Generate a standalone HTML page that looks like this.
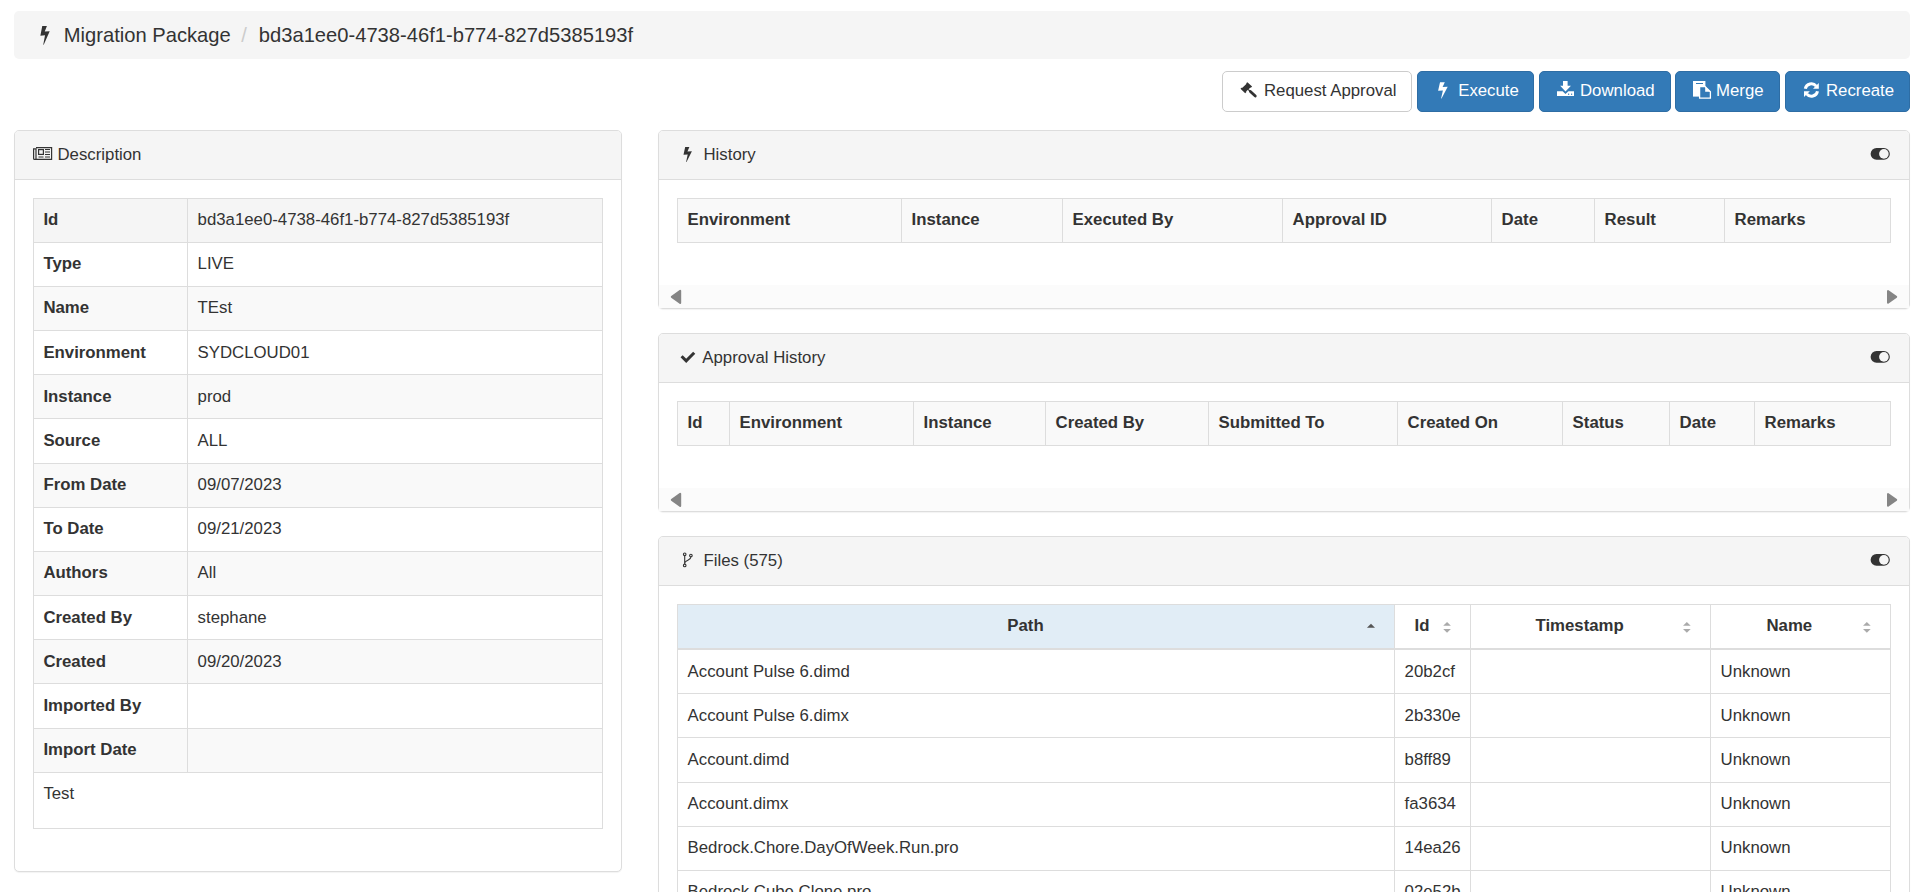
<!DOCTYPE html>
<html><head><meta charset="utf-8"><title>Migration Package</title>
<style>
html,body{margin:0;padding:0;background:#fff}
body{width:1927px;height:892px;overflow:hidden;position:relative;font-family:"Liberation Sans",sans-serif;font-size:16.8px;line-height:24px;color:#333}
body>div,body>span,body>svg{position:absolute;box-sizing:border-box}
body>span{white-space:nowrap;height:24px}
body>span.bc{font-size:20.16px;line-height:29px;height:29px}
</style></head><body>
<div style="left:14px;top:11px;width:1896px;height:48px;background:#f5f5f5;border-radius:5px"></div>
<span class="bc" style="left:63.8px;top:21px">Migration Package</span>
<span class="bc" style="left:241.3px;top:21px;color:#ccc">/</span>
<span class="bc" style="left:258.8px;top:21px">bd3a1ee0-4738-46f1-b774-827d5385193f</span>
<div style="left:1222px;top:71px;width:190px;height:41px;background:#fff;border:1px solid #ccc;border-radius:5px"></div>
<div style="left:1417px;top:71px;width:117px;height:41px;background:#337ab7;border:1px solid #2e6da4;border-radius:5px"></div>
<div style="left:1539px;top:71px;width:132px;height:41px;background:#337ab7;border:1px solid #2e6da4;border-radius:5px"></div>
<div style="left:1675px;top:71px;width:105px;height:41px;background:#337ab7;border:1px solid #2e6da4;border-radius:5px"></div>
<div style="left:1785px;top:71px;width:125px;height:41px;background:#337ab7;border:1px solid #2e6da4;border-radius:5px"></div>
<span style="left:1264px;top:79px;">Request Approval</span>
<span style="left:1458.2px;top:79px;color:#fff">Execute</span>
<span style="left:1580px;top:79px;color:#fff">Download</span>
<span style="left:1716px;top:79px;color:#fff">Merge</span>
<span style="left:1826px;top:79px;color:#fff">Recreate</span>
<div style="left:14px;top:130px;width:608px;height:742px;border:1px solid #ddd;border-radius:5px;background:#fff;box-shadow:0 1px 1px rgba(0,0,0,.05);overflow:hidden"></div>
<div style="left:15px;top:131px;width:606px;height:48px;background:#f5f5f5;border-radius:4px 4px 0 0"></div>
<div style="left:15px;top:179px;width:606px;height:1px;background:#ddd"></div>
<span style="left:57.5px;top:143px;">Description</span>
<div style="left:658px;top:130px;width:1252px;height:179px;border:1px solid #ddd;border-radius:5px;background:#fff;box-shadow:0 1px 1px rgba(0,0,0,.05);overflow:hidden"></div>
<div style="left:659px;top:131px;width:1250px;height:48px;background:#f5f5f5;border-radius:4px 4px 0 0"></div>
<div style="left:659px;top:179px;width:1250px;height:1px;background:#ddd"></div>
<span style="left:703.5px;top:143px;">History</span>
<div style="left:658px;top:333px;width:1252px;height:179px;border:1px solid #ddd;border-radius:5px;background:#fff;box-shadow:0 1px 1px rgba(0,0,0,.05);overflow:hidden"></div>
<div style="left:659px;top:334px;width:1250px;height:48px;background:#f5f5f5;border-radius:4px 4px 0 0"></div>
<div style="left:659px;top:382px;width:1250px;height:1px;background:#ddd"></div>
<span style="left:702.3px;top:346px;">Approval History</span>
<div style="left:658px;top:536px;width:1252px;height:400px;border:1px solid #ddd;border-radius:5px;background:#fff;box-shadow:0 1px 1px rgba(0,0,0,.05);overflow:hidden"></div>
<div style="left:659px;top:537px;width:1250px;height:48px;background:#f5f5f5;border-radius:4px 4px 0 0"></div>
<div style="left:659px;top:585px;width:1250px;height:1px;background:#ddd"></div>
<span style="left:703.5px;top:549px;">Files (575)</span>
<div style="left:34px;top:199px;width:568px;height:43px;background:#f5f5f5"></div>
<div style="left:34px;top:287px;width:568px;height:43px;background:#f9f9f9"></div>
<div style="left:34px;top:375px;width:568px;height:43px;background:#f9f9f9"></div>
<div style="left:34px;top:464px;width:568px;height:43px;background:#f9f9f9"></div>
<div style="left:34px;top:552px;width:568px;height:43px;background:#f9f9f9"></div>
<div style="left:34px;top:640px;width:568px;height:43px;background:#f9f9f9"></div>
<div style="left:34px;top:729px;width:568px;height:43px;background:#f9f9f9"></div>
<div style="left:33px;top:198px;width:570px;height:1px;background:#ddd"></div>
<div style="left:33px;top:242px;width:570px;height:1px;background:#ddd"></div>
<div style="left:33px;top:286px;width:570px;height:1px;background:#ddd"></div>
<div style="left:33px;top:330px;width:570px;height:1px;background:#ddd"></div>
<div style="left:33px;top:374px;width:570px;height:1px;background:#ddd"></div>
<div style="left:33px;top:418px;width:570px;height:1px;background:#ddd"></div>
<div style="left:33px;top:463px;width:570px;height:1px;background:#ddd"></div>
<div style="left:33px;top:507px;width:570px;height:1px;background:#ddd"></div>
<div style="left:33px;top:551px;width:570px;height:1px;background:#ddd"></div>
<div style="left:33px;top:595px;width:570px;height:1px;background:#ddd"></div>
<div style="left:33px;top:639px;width:570px;height:1px;background:#ddd"></div>
<div style="left:33px;top:683px;width:570px;height:1px;background:#ddd"></div>
<div style="left:33px;top:728px;width:570px;height:1px;background:#ddd"></div>
<div style="left:33px;top:772px;width:570px;height:1px;background:#ddd"></div>
<div style="left:33px;top:828px;width:570px;height:1px;background:#ddd"></div>
<div style="left:33px;top:198px;width:1px;height:631px;background:#ddd"></div>
<div style="left:602px;top:198px;width:1px;height:631px;background:#ddd"></div>
<div style="left:187px;top:198px;width:1px;height:574px;background:#ddd"></div>
<span style="left:43.4px;top:208px;font-weight:bold">Id</span>
<span style="left:197.6px;top:208px;">bd3a1ee0-4738-46f1-b774-827d5385193f</span>
<span style="left:43.4px;top:252px;font-weight:bold">Type</span>
<span style="left:197.6px;top:252px;">LIVE</span>
<span style="left:43.4px;top:296px;font-weight:bold">Name</span>
<span style="left:197.6px;top:296px;">TEst</span>
<span style="left:43.4px;top:341px;font-weight:bold">Environment</span>
<span style="left:197.6px;top:341px;">SYDCLOUD01</span>
<span style="left:43.4px;top:385px;font-weight:bold">Instance</span>
<span style="left:197.6px;top:385px;">prod</span>
<span style="left:43.4px;top:429px;font-weight:bold">Source</span>
<span style="left:197.6px;top:429px;">ALL</span>
<span style="left:43.4px;top:473px;font-weight:bold">From Date</span>
<span style="left:197.6px;top:473px;">09/07/2023</span>
<span style="left:43.4px;top:517px;font-weight:bold">To Date</span>
<span style="left:197.6px;top:517px;">09/21/2023</span>
<span style="left:43.4px;top:561px;font-weight:bold">Authors</span>
<span style="left:197.6px;top:561px;">All</span>
<span style="left:43.4px;top:606px;font-weight:bold">Created By</span>
<span style="left:197.6px;top:606px;">stephane</span>
<span style="left:43.4px;top:650px;font-weight:bold">Created</span>
<span style="left:197.6px;top:650px;">09/20/2023</span>
<span style="left:43.4px;top:694px;font-weight:bold">Imported By</span>
<span style="left:43.4px;top:738px;font-weight:bold">Import Date</span>
<span style="left:43.4px;top:782px;">Test</span>
<div style="left:678px;top:199px;width:1212px;height:43px;background:#f9f9f9"></div>
<div style="left:677px;top:198px;width:1214px;height:1px;background:#ddd"></div>
<div style="left:677px;top:242px;width:1214px;height:1px;background:#ddd"></div>
<div style="left:677px;top:198px;width:1px;height:45px;background:#ddd"></div>
<div style="left:901px;top:198px;width:1px;height:45px;background:#ddd"></div>
<div style="left:1062px;top:198px;width:1px;height:45px;background:#ddd"></div>
<div style="left:1282px;top:198px;width:1px;height:45px;background:#ddd"></div>
<div style="left:1491px;top:198px;width:1px;height:45px;background:#ddd"></div>
<div style="left:1594px;top:198px;width:1px;height:45px;background:#ddd"></div>
<div style="left:1724px;top:198px;width:1px;height:45px;background:#ddd"></div>
<div style="left:1890px;top:198px;width:1px;height:45px;background:#ddd"></div>
<span style="left:687.6px;top:208px;font-weight:bold">Environment</span>
<span style="left:911.6px;top:208px;font-weight:bold">Instance</span>
<span style="left:1072.6px;top:208px;font-weight:bold">Executed By</span>
<span style="left:1292.6px;top:208px;font-weight:bold">Approval ID</span>
<span style="left:1501.6px;top:208px;font-weight:bold">Date</span>
<span style="left:1604.6px;top:208px;font-weight:bold">Result</span>
<span style="left:1734.6px;top:208px;font-weight:bold">Remarks</span>
<div style="left:678px;top:402px;width:1212px;height:43px;background:#f9f9f9"></div>
<div style="left:677px;top:401px;width:1214px;height:1px;background:#ddd"></div>
<div style="left:677px;top:445px;width:1214px;height:1px;background:#ddd"></div>
<div style="left:677px;top:401px;width:1px;height:45px;background:#ddd"></div>
<div style="left:729px;top:401px;width:1px;height:45px;background:#ddd"></div>
<div style="left:913px;top:401px;width:1px;height:45px;background:#ddd"></div>
<div style="left:1045px;top:401px;width:1px;height:45px;background:#ddd"></div>
<div style="left:1208px;top:401px;width:1px;height:45px;background:#ddd"></div>
<div style="left:1397px;top:401px;width:1px;height:45px;background:#ddd"></div>
<div style="left:1562px;top:401px;width:1px;height:45px;background:#ddd"></div>
<div style="left:1669px;top:401px;width:1px;height:45px;background:#ddd"></div>
<div style="left:1754px;top:401px;width:1px;height:45px;background:#ddd"></div>
<div style="left:1890px;top:401px;width:1px;height:45px;background:#ddd"></div>
<span style="left:687.6px;top:411px;font-weight:bold">Id</span>
<span style="left:739.6px;top:411px;font-weight:bold">Environment</span>
<span style="left:923.6px;top:411px;font-weight:bold">Instance</span>
<span style="left:1055.6px;top:411px;font-weight:bold">Created By</span>
<span style="left:1218.6px;top:411px;font-weight:bold">Submitted To</span>
<span style="left:1407.6px;top:411px;font-weight:bold">Created On</span>
<span style="left:1572.6px;top:411px;font-weight:bold">Status</span>
<span style="left:1679.6px;top:411px;font-weight:bold">Date</span>
<span style="left:1764.6px;top:411px;font-weight:bold">Remarks</span>
<div style="left:659px;top:285px;width:1250px;height:23px;background:#fbfbfb"></div>
<svg style="left:668px;top:288px" width="16" height="18"><path d="M12.2 2.8 L12.2 15 L3.8 8.9 Z" fill="#858585" stroke="#858585" stroke-width="2" stroke-linejoin="round"/></svg>
<svg style="left:1884px;top:288px" width="16" height="18"><path d="M4 3 L4 14.8 L12.2 8.9 Z" fill="#858585" stroke="#858585" stroke-width="2" stroke-linejoin="round"/></svg>
<div style="left:659px;top:488px;width:1250px;height:23px;background:#fbfbfb"></div>
<svg style="left:668px;top:491px" width="16" height="18"><path d="M12.2 2.8 L12.2 15 L3.8 8.9 Z" fill="#858585" stroke="#858585" stroke-width="2" stroke-linejoin="round"/></svg>
<svg style="left:1884px;top:491px" width="16" height="18"><path d="M4 3 L4 14.8 L12.2 8.9 Z" fill="#858585" stroke="#858585" stroke-width="2" stroke-linejoin="round"/></svg>
<div style="left:678px;top:605px;width:716px;height:43px;background:#e1edf6"></div>
<div style="left:677px;top:604px;width:1214px;height:1px;background:#ddd"></div>
<div style="left:677px;top:648px;width:1214px;height:2px;background:#ddd"></div>
<div style="left:677px;top:693px;width:1214px;height:1px;background:#ddd"></div>
<div style="left:677px;top:737px;width:1214px;height:1px;background:#ddd"></div>
<div style="left:677px;top:782px;width:1214px;height:1px;background:#ddd"></div>
<div style="left:677px;top:826px;width:1214px;height:1px;background:#ddd"></div>
<div style="left:677px;top:870px;width:1214px;height:1px;background:#ddd"></div>
<div style="left:677px;top:604px;width:1px;height:288px;background:#ddd"></div>
<div style="left:1394px;top:604px;width:1px;height:288px;background:#ddd"></div>
<div style="left:1470px;top:604px;width:1px;height:288px;background:#ddd"></div>
<div style="left:1710px;top:604px;width:1px;height:288px;background:#ddd"></div>
<div style="left:1890px;top:604px;width:1px;height:288px;background:#ddd"></div>
<span style="left:1007.3px;top:614px;font-weight:bold">Path</span>
<span style="left:1414.5px;top:614px;font-weight:bold">Id</span>
<span style="left:1535.5px;top:614px;font-weight:bold">Timestamp</span>
<span style="left:1766.5px;top:614px;font-weight:bold">Name</span>
<span style="left:687.6px;top:660px;">Account Pulse 6.dimd</span>
<span style="left:1404.6px;top:660px;">20b2cf</span>
<span style="left:1720.6px;top:660px;">Unknown</span>
<span style="left:687.6px;top:704px;">Account Pulse 6.dimx</span>
<span style="left:1404.6px;top:704px;">2b330e</span>
<span style="left:1720.6px;top:704px;">Unknown</span>
<span style="left:687.6px;top:748px;">Account.dimd</span>
<span style="left:1404.6px;top:748px;">b8ff89</span>
<span style="left:1720.6px;top:748px;">Unknown</span>
<span style="left:687.6px;top:792px;">Account.dimx</span>
<span style="left:1404.6px;top:792px;">fa3634</span>
<span style="left:1720.6px;top:792px;">Unknown</span>
<span style="left:687.6px;top:836px;">Bedrock.Chore.DayOfWeek.Run.pro</span>
<span style="left:1404.6px;top:836px;">14ea26</span>
<span style="left:1720.6px;top:836px;">Unknown</span>
<span style="left:687.6px;top:880px;">Bedrock.Cube.Clone.pro</span>
<span style="left:1404.6px;top:880px;">02e52b</span>
<span style="left:1720.6px;top:880px;">Unknown</span>
<svg style="left:0;top:0" width="1927" height="892"><path d="M42.24 25.90 L46.90 25.90 L44.76 31.54 L49.70 31.26 L43.73 44.70 L43.26 44.70 L45.03 35.30 L40.37 35.68 Z" fill="#333"/><path d="M685.18 147.00 L689.38 147.00 L687.45 151.50 L691.90 151.28 L686.52 162.00 L686.10 162.00 L687.70 154.50 L683.50 154.80 Z" fill="#333"/><path d="M1440.02 82.20 L1444.82 82.20 L1442.61 87.12 L1447.70 86.87 L1441.56 98.60 L1441.08 98.60 L1442.90 90.40 L1438.10 90.73 Z" fill="#fff"/><rect x="1870.6" y="148" width="19.2" height="11.8" rx="5.9" fill="#333"/><circle cx="1883.9" cy="153.9" r="4.8" fill="#f5f5f5"/><rect x="1870.6" y="351" width="19.2" height="11.8" rx="5.9" fill="#333"/><circle cx="1883.9" cy="356.9" r="4.8" fill="#f5f5f5"/><rect x="1870.6" y="554" width="19.2" height="11.8" rx="5.9" fill="#333"/><circle cx="1883.9" cy="559.9" r="4.8" fill="#f5f5f5"/><path d="M681.6 356.2 L686.2 360.9 L694.2 352.8" fill="none" stroke="#333" stroke-width="3"/><g fill="none" stroke="#333" stroke-width="1.1"><circle cx="684.7" cy="554.3" r="1.3"/><circle cx="684.7" cy="565.4" r="1.3"/><circle cx="690.9" cy="555.5" r="1.3"/><path d="M684.7 555.8 V563.9"/><path d="M690.9 557 C690.9 560 686 560 684.9 562.5"/></g><g fill="none" stroke="#333" stroke-width="1.2"><path d="M36 147.6 H51.6 V159.4 H34.6 Q33.6 159.4 33.6 158.4 V148.8 H36 V159.2"/><rect x="38.6" y="149.6" width="4.8" height="4.8"/></g><g stroke="#333" stroke-width="1"><path d="M45 149.5 H50 M45 152 H50 M45 154.5 H50 M38.5 157 H43.5 M45 157 H50"/></g><path d="M1240.50 88.75 L1241.49 87.80 L1242.38 87.67 L1246.28 83.94 L1246.40 83.10 L1247.40 82.15 L1252.10 86.55 L1251.11 87.50 L1250.22 87.63 L1246.32 91.36 L1246.20 92.20 L1245.20 93.15 Z" fill="#333"/><path d="M1247.69 89.77 L1248.56 88.94 L1250.82 91.06 L1249.95 91.89 Z" fill="#333"/><path d="M1250.39 91.47 L1255.28 96.05" stroke="#333" stroke-width="2.8" stroke-linecap="round"/><g fill="#fff"><rect x="1563" y="81" width="4.6" height="5.5"/><path d="M1560.2 85.8 H1570.9 L1565.5 91.6 Z"/><path d="M1557 91.2 H1562.6 L1565.5 94 L1568.4 91.2 H1574 V95.9 H1557 Z"/></g><g fill="#337ab7"><rect x="1568" y="93.6" width="1.2" height="1.2"/><rect x="1571" y="93.6" width="1.2" height="1.2"/></g><g><rect x="1693" y="81" width="12.4" height="15.6" fill="#fff"/><path d="M1696 83.5 H1703" stroke="#337ab7" stroke-width="1"/><path d="M1699.6 86.6 H1705.2 L1710.4 91.8 V98.2 H1699.6 Z" fill="#337ab7" stroke="#fff" stroke-width="1.3"/><path d="M1705.2 86.6 V91.8 H1710.4" fill="#fff"/></g><g fill="none" stroke="#fff" stroke-width="3"><path d="M1805.3 88.75 A6.2 6.2 0 0 1 1816.2 86.1"/><path d="M1817.5 91.25 A6.2 6.2 0 0 1 1806.6 93.9"/></g><g fill="#fff"><path d="M1818.8 83 V88.75 H1813 Z"/><path d="M1804 97 V91.25 H1809.8 Z"/></g><path d="M1366.9 627.8 L1371 623.8 L1375 627.8 Z" fill="#555"/><path d="M1443.2 625.8 L1447.05 622.1 L1450.9 625.8 Z M1443.2 628.9 L1447.05 632.8 L1450.9 628.9 Z" fill="#aaa"/><path d="M1683 625.8 L1686.85 622.1 L1690.7 625.8 Z M1683 628.9 L1686.85 632.8 L1690.7 628.9 Z" fill="#aaa"/><path d="M1863 625.8 L1866.85 622.1 L1870.7 625.8 Z M1863 628.9 L1866.85 632.8 L1870.7 628.9 Z" fill="#aaa"/></svg>
</body></html>
